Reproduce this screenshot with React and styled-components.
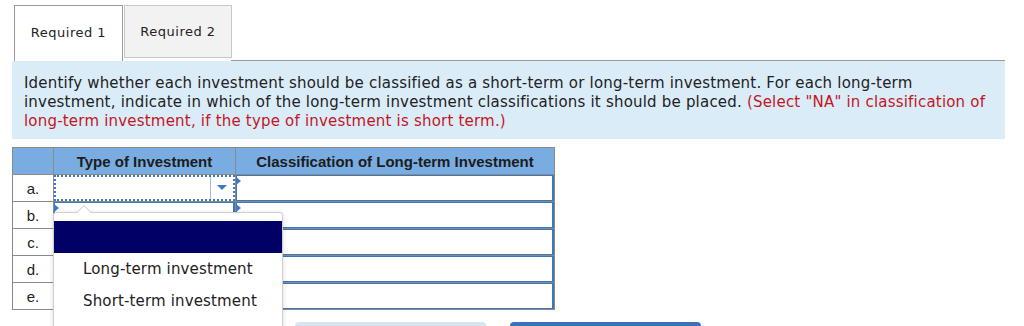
import React from 'react';
import styled, { createGlobalStyle } from 'styled-components';

const GlobalStyle = createGlobalStyle`
    html, body {
        margin: 0;
        padding: 0;
        background: #fff;
        overflow: hidden;
    }
`;

const rows = ['a.', 'b.', 'c.', 'd.', 'e.'];
const options = ['Long-term investment', 'Short-term investment'];

const App = () => {
    return (
        <>
            <GlobalStyle />
            <Page>
                <TabBar>
                    <Tab active>Required 1</Tab>
                    <Tab>Required 2</Tab>
                    <TabLine />
                </TabBar>

                <Instructions>
                    Identify whether each investment should be classified as a short-term or long-term investment. For each long-term
                    <br />
                    investment, indicate in which of the long-term investment classifications it should be placed.{' '}
                    <Note>(Select "NA" in classification of</Note>
                    <br />
                    <Note>long-term investment, if the type of investment is short term.)</Note>
                </Instructions>

                <TableWrap>
                    <Table>
                        <thead>
                            <tr>
                                <HeadCell width={40} />
                                <HeadCell width={181}>Type of Investment</HeadCell>
                                <HeadCell>Classification of Long-term Investment</HeadCell>
                            </tr>
                        </thead>
                        <tbody>
                            {rows.map((label, i) => (
                                <tr key={label}>
                                    <LabelCell>{label}</LabelCell>
                                    <InputCell>
                                        {i === 0 ? (
                                            <SelectBox>
                                                <Arrow />
                                            </SelectBox>
                                        ) : (
                                            <InputBox />
                                        )}
                                        {i === 1 && <Marker />}
                                    </InputCell>
                                    <InputCell>
                                        <InputBox />
                                        {i < 2 && <Marker />}
                                    </InputCell>
                                </tr>
                            ))}
                        </tbody>
                    </Table>

                    <Dropdown>
                        <Caret />
                        <Option selected>&nbsp;</Option>
                        {options.map((o) => (
                            <Option key={o}>{o}</Option>
                        ))}
                    </Dropdown>
                </TableWrap>

                <Buttons>
                    <Button>&nbsp;</Button>
                    <Button primary>&nbsp;</Button>
                </Buttons>
            </Page>
        </>
    );
};

const Page = styled.div`
    padding: 5px 19px 0 12px;
    font-family: "DejaVu Sans", Verdana, sans-serif;
    color: #222;
`;

const TabBar = styled.div`
    display: flex;
    align-items: flex-end;
    padding-left: 2px;
    height: 56px;
`;

const Tab = styled.div`
    box-sizing: border-box;
    width: ${(p) => (p.active ? '109px' : '108px')};
    height: ${(p) => (p.active ? '56px' : '53px')};
    align-self: flex-start;
    margin-right: ${(p) => (p.active ? '1px' : '0')};
    display: flex;
    align-items: center;
    justify-content: center;
    font-size: 13px;
    letter-spacing: 0.5px;
    color: #222;
    background: ${(p) => (p.active ? '#fff' : '#f2f2f2')};
    border: 1px solid ${(p) => (p.active ? '#9a9a9a' : '#c8c8c8')};
    border-bottom: ${(p) => (p.active ? 'none' : '1px solid #c8c8c8')};
    padding-bottom: ${(p) => (p.active ? '2px' : '0')};
`;

const TabLine = styled.div`
    flex: 1;
    border-bottom: 1px solid #9a9a9a;
    margin-left: -1px;
`;

const Instructions = styled.div`
    background: #dbecf9;
    padding: 13px 12px 8px 12px;
    font-size: 15px;
    letter-spacing: 0.2px;
    line-height: 19px;
    white-space: nowrap;
    color: #222;
`;

const Note = styled.span`
    color: #c4161c;
`;

const TableWrap = styled.div`
    position: relative;
    margin-top: 8px;
    width: 543px;
    font-family: "Liberation Sans", Arial, sans-serif;
`;

const Table = styled.table`
    border-collapse: collapse;
    width: 543px;
    table-layout: fixed;
`;

const HeadCell = styled.th`
    width: ${(p) => (p.width ? `${p.width}px` : 'auto')};
    height: 26px;
    padding: 0;
    background: #79ade2;
    border: 1px solid #8a8a8a;
    font-size: 15px;
    font-weight: bold;
    color: #1c1c1c;
    text-align: center;
`;

const LabelCell = styled.td`
    height: 26px;
    padding: 0;
    border: 1px solid #8a8a8a;
    font-size: 15px;
    text-align: center;
    color: #222;
    background: #fff;
`;

const InputCell = styled.td`
    position: relative;
    padding: 0;
    border: 1px solid #8a8a8a;
    background: #fff;
`;

const InputBox = styled.div`
    box-sizing: border-box;
    height: 26px;
    border: 1px solid #3d76bb;
    border-right-width: 2px;
    background: #fff;
`;

const SelectBox = styled.div`
    position: relative;
    box-sizing: border-box;
    height: 26px;
    border: 2px dotted #3b78c8;
    background: #fff;
`;

const Arrow = styled.div`
    position: absolute;
    right: 0;
    top: 0;
    bottom: 0;
    width: 22px;
    border-left: 1px solid #a9bdd6;
    &::after {
        content: '';
        position: absolute;
        left: 6px;
        top: 8px;
        border-left: 5px solid transparent;
        border-right: 5px solid transparent;
        border-top: 5px solid #3b78c8;
    }
`;

const Marker = styled.span`
    position: absolute;
    left: 0;
    top: 2px;
    border-top: 4px solid transparent;
    border-bottom: 4px solid transparent;
    border-left: 5px solid #3b78c8;
`;

const Dropdown = styled.div`
    position: absolute;
    left: 41px;
    top: 65px;
    width: 230px;
    height: 140px;
    box-sizing: border-box;
    padding-top: 8px;
    background: #fff;
    border: 1px solid #cfcfcf;
    border-radius: 3px;
    box-shadow: 0 1px 5px rgba(0, 0, 0, 0.15);
    font-family: "DejaVu Sans", Verdana, sans-serif;
`;

const Caret = styled.div`
    position: absolute;
    left: 22px;
    top: -8px;
    width: 0;
    height: 0;
    border-left: 8px solid transparent;
    border-right: 8px solid transparent;
    border-bottom: 8px solid #c4c4c4;
    &::after {
        content: '';
        position: absolute;
        left: -7px;
        top: 1px;
        border-left: 7px solid transparent;
        border-right: 7px solid transparent;
        border-bottom: 7px solid #fff;
    }
`;

const Option = styled.div`
    height: 32px;
    display: flex;
    align-items: center;
    padding-left: 29px;
    font-size: 15px;
    letter-spacing: 0.15px;
    color: #222;
    background: ${(p) => (p.selected ? '#000066' : 'transparent')};
`;

const Buttons = styled.div`
    display: flex;
    gap: 24px;
    margin-top: 12px;
    padding-left: 283px;
`;

const Button = styled.div`
    width: 191px;
    height: 30px;
    border-radius: 4px;
    background: ${(p) => (p.primary ? '#3a72b5' : '#d8e4f1')};
`;

export default App;
